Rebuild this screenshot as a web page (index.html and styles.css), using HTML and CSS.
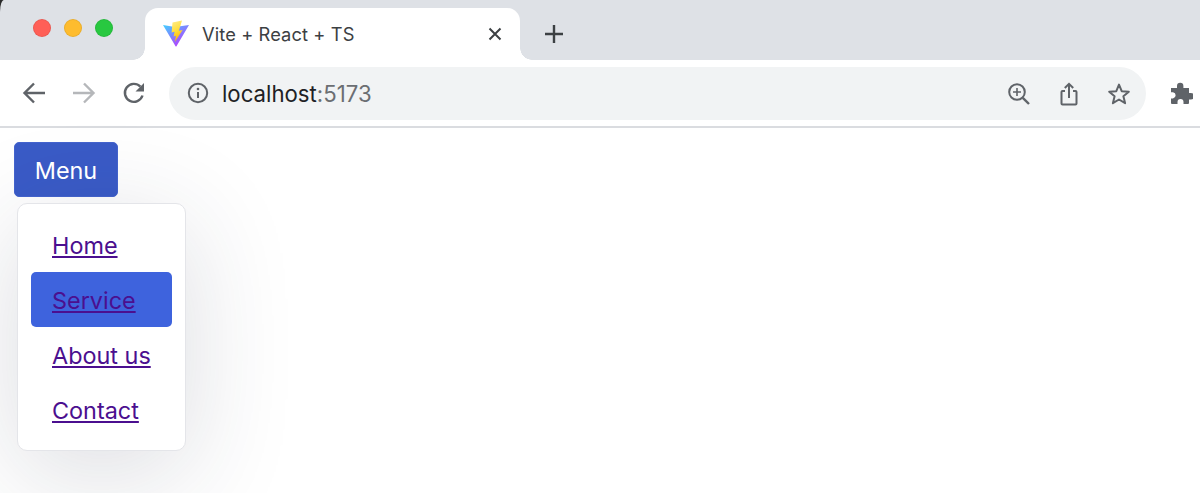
FILE: index.html
```html
<!DOCTYPE html>
<html>
    <head>
        <title>Vite + React + TS</title>
        <link rel="stylesheet" href="styles.css">
    </head>
    <body>
        <div class="tab-strip">
            <div class="traffic-lights">
                <span class="light red"></span>
                <span class="light yellow"></span>
                <span class="light green"></span>
            </div>
            <div class="tab">
                <svg class="favicon" width="28" height="28" viewBox="0 0 28 28">
                    <defs>
                        <linearGradient id="vite-body" x1="0" y1="0" x2="0.75" y2="1">
                            <stop offset="0" stop-color="#41d1ff"/>
                            <stop offset="1" stop-color="#bd34fe"/>
                        </linearGradient>
                        <linearGradient id="vite-bolt" x1="0.3" y1="0" x2="0.6" y2="1">
                            <stop offset="0" stop-color="#ffea83"/>
                            <stop offset="0.5" stop-color="#ffdd35"/>
                            <stop offset="1" stop-color="#ffa800"/>
                        </linearGradient>
                    </defs>
                    <path d="M1 5 L13 7 L27 5 L14.6 26 Q14 27 13.4 26 Z" fill="url(#vite-body)"/>
                    <path d="M20 0.5 L10.5 2.4 L9.6 12.5 L12.6 11.8 L11.6 16.4 L14 15.8 L12.8 22 L20.6 10 L16.8 10.8 L18 7 Z" fill="url(#vite-bolt)"/>
                </svg>
                <span class="tab-title">Vite + React + TS</span>
                <svg class="tab-close" width="14" height="14" viewBox="0 0 14 14">
                    <path d="M1.5 1.5 L12.5 12.5 M12.5 1.5 L1.5 12.5" stroke="#3c4043" stroke-width="2" fill="none"/>
                </svg>
            </div>
            <svg class="new-tab" width="20" height="20" viewBox="0 0 20 20">
                <path d="M10 1 V19 M1 10 H19" stroke="#3c4043" stroke-width="2.4" fill="none"/>
            </svg>
        </div>

        <div class="toolbar">
            <svg class="nav-icon" width="24" height="24" viewBox="0 0 24 24">
                <path d="M23 12 H3 M12 2.5 L2.5 12 L12 21.5" stroke="#5f6368" stroke-width="2.4" fill="none"/>
            </svg>
            <svg class="nav-icon" width="24" height="24" viewBox="0 0 24 24">
                <path d="M1 12 H21 M12 2.5 L21.5 12 L12 21.5" stroke="#b5b7ba" stroke-width="2.4" fill="none"/>
            </svg>
            <svg class="nav-icon" width="24" height="24" viewBox="0 0 24 24">
                <path d="M20.5 14.5 A9 9 0 1 1 18.4 5.6" stroke="#5f6368" stroke-width="2.4" fill="none"/>
                <path d="M22 2 V10.5 H13.5 Z" fill="#5f6368"/>
            </svg>
            <div class="omnibox">
                <svg width="22" height="22" viewBox="0 0 22 22">
                    <circle cx="11" cy="11" r="9.2" stroke="#5f6368" stroke-width="2" fill="none"/>
                    <path d="M11 10 V16" stroke="#5f6368" stroke-width="2"/>
                    <circle cx="11" cy="7" r="1.3" fill="#5f6368"/>
                </svg>
                <div class="url"><span class="host">localhost</span>:5173</div>
                <div class="omnibox-actions">
                    <svg width="24" height="24" viewBox="0 0 24 24">
                        <circle cx="10" cy="10" r="7.8" stroke="#5f6368" stroke-width="2" fill="none"/>
                        <path d="M15.8 15.8 L22 22" stroke="#5f6368" stroke-width="2.4"/>
                        <path d="M10 6 V14 M6 10 H14" stroke="#5f6368" stroke-width="1.6"/>
                    </svg>
                    <svg width="24" height="24" viewBox="0 0 24 24">
                        <path d="M8 9 H5.5 Q4.5 9 4.5 10 V21.5 Q4.5 22.5 5.5 22.5 H18.5 Q19.5 22.5 19.5 21.5 V10 Q19.5 9 18.5 9 H16" stroke="#5f6368" stroke-width="2" fill="none"/>
                        <path d="M12 16 V2 M7.8 6 L12 1.8 L16.2 6" stroke="#5f6368" stroke-width="2" fill="none"/>
                    </svg>
                    <svg width="24" height="24" viewBox="0 0 24 24">
                        <path d="M12 2.6 L14.7 9.2 L21.8 9.7 L16.4 14.3 L18.1 21.2 L12 17.5 L5.9 21.2 L7.6 14.3 L2.2 9.7 L9.3 9.2 Z" stroke="#5f6368" stroke-width="2" stroke-linejoin="round" fill="none"/>
                    </svg>
                </div>
            </div>
            <svg class="extensions" width="24" height="24" viewBox="0 0 24 24">
                <path d="M2 7 H8 V5 A3.2 3.2 0 0 1 14.4 5 V7 H20 V12 H22 A3.2 3.2 0 0 1 22 18.4 H20 V22 Q20 23 19 23 H14.5 V21 A3 3 0 0 0 8.5 21 V23 H3 Q2 23 2 22 V17.5 H4 A3.2 3.2 0 0 0 4 11.2 H2 Z" fill="#5f6368"/>
            </svg>
        </div>

        <div class="page">
            <button class="menu-button">Menu</button>
            <ul class="menu">
                <li class="menu-item"><a href="#home">Home</a></li>
                <li class="menu-item active"><a href="#service">Service</a></li>
                <li class="menu-item"><a href="#about">About us</a></li>
                <li class="menu-item"><a href="#contact">Contact</a></li>
            </ul>
        </div>
    </body>
</html>
```

FILE: styles.css
```css
html, body { height: 100%; }
body { margin: 0; background: #2a2a2a; font-family: Inter, "Liberation Sans", sans-serif; overflow: hidden; display: flex; flex-direction: column; }

.tab-strip { flex: none; height: 60px; background: #dee1e6; display: flex; align-items: flex-end; box-sizing: border-box; padding-left: 33px; border-top-left-radius: 4px 12px; }
.traffic-lights { display: flex; gap: 13px; align-self: flex-start; margin-top: 19px; margin-right: 32px; }
.light { width: 18px; height: 18px; border-radius: 50%; box-sizing: border-box; border: 1px solid rgba(0, 0, 0, 0.08); }
.red { background: #ff5f57; }
.yellow { background: #febc2e; }
.green { background: #28c840; }

.tab { position: relative; width: 375px; height: 52px; background: white; border-radius: 13px 13px 0 0; display: flex; align-items: center; box-sizing: border-box; padding: 0 18px 0 17px; }
.tab::before, .tab::after { content: ""; position: absolute; bottom: 0; width: 12px; height: 12px; }
.tab::before { left: -12px; background: radial-gradient(circle at 0 0, #dee1e6 11.5px, white 12px); }
.tab::after { right: -12px; background: radial-gradient(circle at 100% 0, #dee1e6 11.5px, white 12px); }
.favicon { margin-right: 12px; flex: none; }
.tab-title { flex: 1; font-size: 18.3px; color: #3c4043; letter-spacing: 0.1px; }
.new-tab { margin-left: 24px; margin-bottom: 16px; }

.toolbar { flex: none; height: 66px; background: white; border-bottom: 2px solid #dadce0; display: flex; align-items: center; padding-left: 22px; padding-right: 7px; gap: 26px; }
.nav-icon { flex: none; }
.omnibox { flex: 1; height: 53px; margin-left: -3px; margin-right: -3px; background: #f1f3f4; border-radius: 27px; display: flex; align-items: center; padding: 0 15px 0 18px; color: #5f6368; font-size: 22.2px; }
.url { margin-left: 13px; flex: 1; color: #6b6e72; }
.host { color: #202124; }
.omnibox-actions { display: flex; gap: 26px; margin-top: 1px; }
.extensions { flex: none; }

.page { flex: 1; min-height: 0; box-sizing: border-box; background: white; padding: 14px; }
.menu-button { display: block; width: 104px; height: 55px; background: #3a5bc7; color: white; border: 1px solid #4464ce; border-radius: 5px; font-family: inherit; font-size: 23.4px; padding: 2px 0 0; }
.menu { list-style: none; width: 169px; box-sizing: border-box; margin: 6px 0 0 3px; padding: 13px; background: white; border: 1px solid #e4e5e9; border-radius: 10px; box-shadow: 0 22px 110px rgba(40, 45, 70, 0.16); }
.menu-item { height: 55px; box-sizing: border-box; display: flex; align-items: center; padding: 2px 0 0 21px; border-radius: 5px; font-size: 23.4px; }
.menu-item a { color: #4b0f8f; text-decoration-thickness: 2px; text-underline-offset: 2px; }
.active { background: #3e63dd; }
```
